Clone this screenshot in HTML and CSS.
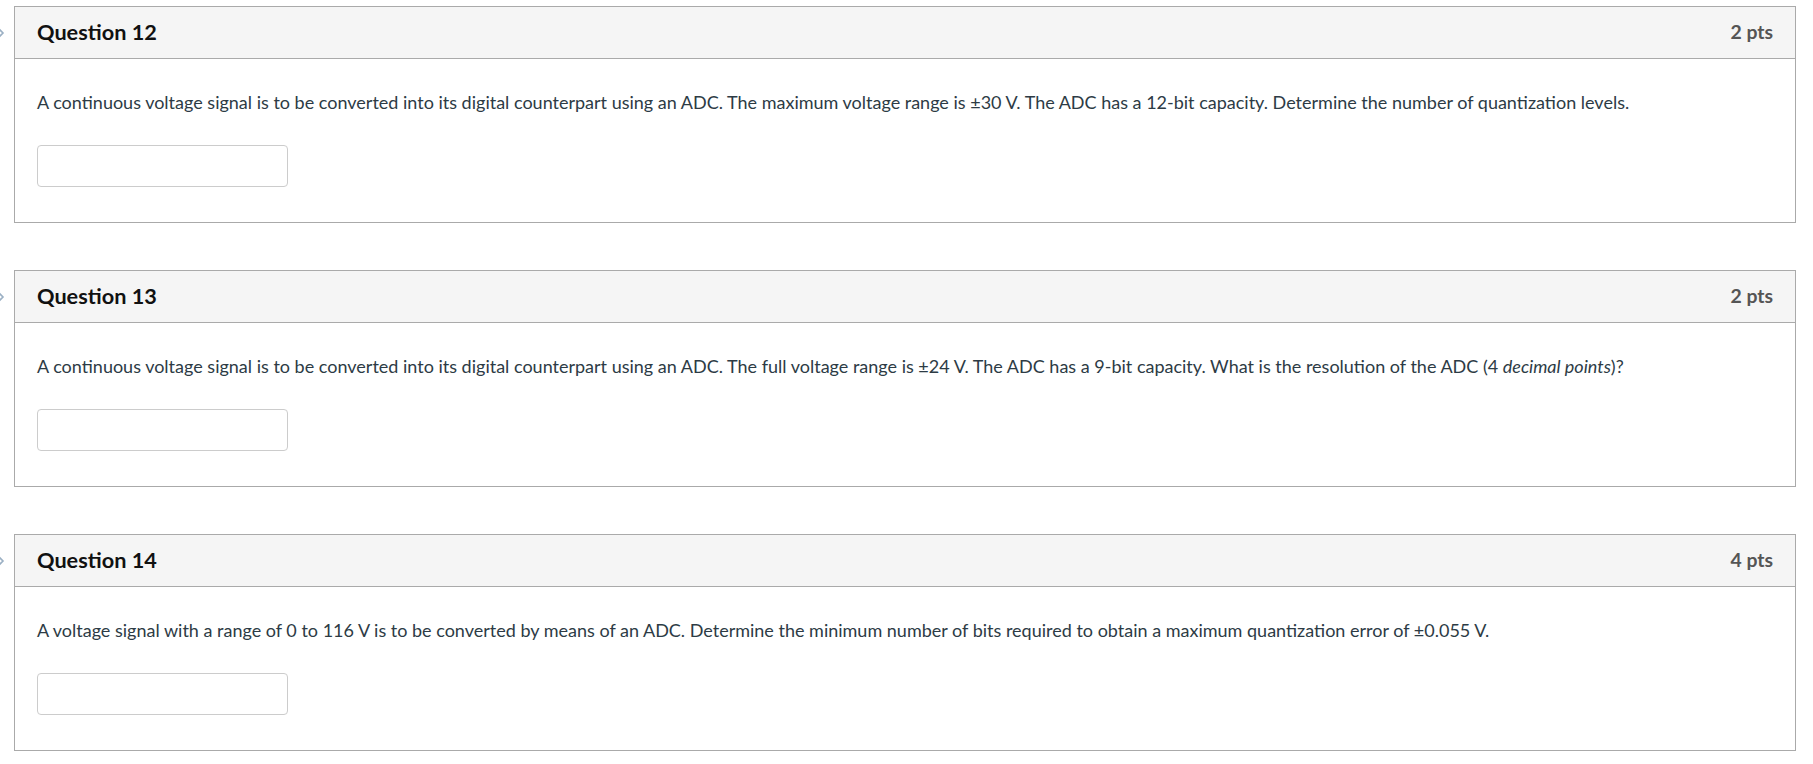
FILE: index.html
```html
<!DOCTYPE html>
<html>
<head>
<meta charset="utf-8">
<link rel="stylesheet" href="styles.css">
</head>
<body>
<div class="quiz">
  <div class="question">
    <svg class="marker" width="8" height="12" viewBox="0 0 8 12"><path d="M1 1 L6 6 L1 11" fill="none" stroke="#9bb0c4" stroke-width="1.6"/></svg>
    <div class="q-header">
      <span class="q-title">Question 12</span>
      <span class="q-pts">2 pts</span>
    </div>
    <div class="q-body">
      <p class="q-text">A continuous voltage signal is to be converted into its digital counterpart using an ADC. The maximum voltage range is ±30 V. The ADC has a 12-bit capacity. Determine the number of quantization levels.</p>
      <input class="q-input" type="text">
    </div>
  </div>
  <div class="question">
    <svg class="marker" width="8" height="12" viewBox="0 0 8 12"><path d="M1 1 L6 6 L1 11" fill="none" stroke="#9bb0c4" stroke-width="1.6"/></svg>
    <div class="q-header">
      <span class="q-title">Question 13</span>
      <span class="q-pts">2 pts</span>
    </div>
    <div class="q-body">
      <p class="q-text">A continuous voltage signal is to be converted into its digital counterpart using an ADC. The full voltage range is ±24 V. The ADC has a 9-bit capacity. What is the resolution of the ADC (4 <em>decimal points</em>)?</p>
      <input class="q-input" type="text">
    </div>
  </div>
  <div class="question">
    <svg class="marker" width="8" height="12" viewBox="0 0 8 12"><path d="M1 1 L6 6 L1 11" fill="none" stroke="#9bb0c4" stroke-width="1.6"/></svg>
    <div class="q-header">
      <span class="q-title">Question 14</span>
      <span class="q-pts">4 pts</span>
    </div>
    <div class="q-body">
      <p class="q-text">A voltage signal with a range of 0 to 116 V is to be converted by means of an ADC. Determine the minimum number of bits required to obtain a maximum quantization error of ±0.055 V.</p>
      <input class="q-input" type="text">
    </div>
  </div>
</div>
</body>
</html>
```
FILE: styles.css
```css
html, body {
  margin: 0;
  padding: 0;
  background: #fff;
}
body {
  font-family: Lato, "Open Sans", sans-serif;
  color: #2d3b45;
}
.quiz {
  padding: 6px 17px 0 14px;
  display: flex;
  flex-direction: column;
  gap: 47px;
}
.question {
  position: relative;
  border: 1px solid #aaaaaa;
}
.marker {
  position: absolute;
  left: -18px;
  top: 20px;
}
.q-header {
  box-sizing: border-box;
  height: 52px;
  background: #f5f5f5;
  border-bottom: 1px solid #aaaaaa;
  display: flex;
  align-items: center;
  justify-content: space-between;
  padding: 0 22px 2px;
}
.q-title {
  font-weight: 700;
  font-size: 21.7px;
  color: #111;
}
.q-pts {
  font-weight: 700;
  font-size: 19.4px;
  color: #555;
}
.q-body {
  padding: 31px 22px 35px;
}
.q-text {
  margin: 0 0 30px;
  font-size: 18px;
  line-height: 25px;
  color: #2d3b45;
}
.q-text em {
  font-style: italic;
}
.q-input {
  display: block;
  box-sizing: border-box;
  width: 251px;
  height: 42px;
  border: 1px solid #cccccc;
  border-radius: 4px;
  margin: 0;
  padding: 0 8px;
  background: #fff;
}
```
